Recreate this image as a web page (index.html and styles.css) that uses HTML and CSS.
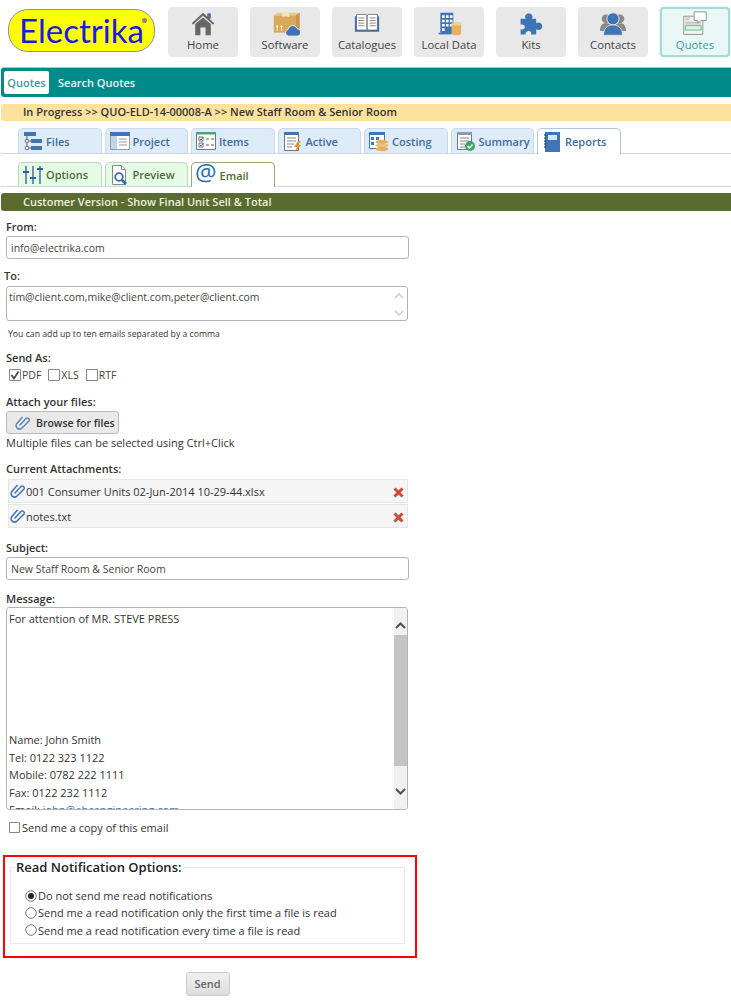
FILE: index.html
```html
<!DOCTYPE html>
<html lang="en">
<head>
<meta charset="utf-8">
<title>Electrika Quotes</title>
<link rel="stylesheet" href="styles.css">
</head>
<body>
<header class="top">
  <div class="logo"><span>Electrika</span><i class="reg"></i></div>
  <nav class="nav">
    <a class="nav-btn"><svg width="30" height="30" viewBox="0 0 30 30"><path d="M15 2 2 14l1.500 1.500L15 5.500l11.500 10L28 14l-5-4.600V3h-3v3.500z" fill="#666"/><path d="M21 3h3v6l-3-2.800z" fill="#3f75b5"/><path d="M6 15 15 7.500 24 15v13h-6v-9h-6v9H6z" fill="#666"/></svg><span>Home</span></a>
    <a class="nav-btn"><svg width="36" height="30" viewBox="0 0 36 30"><path d="M5 5h25v20H5z" fill="#d9a85a"/><path d="M5 5l5-3h25l-5 3z" fill="#eac78a"/><path d="M30 5l5-3v19l-5 4z" fill="#c99645"/><path d="M15 1h8v6l-4-1-4 1z" fill="#f3e3c2"/><path d="M9 17v6M8 18.500l1-1.500 1 1.500M14 17v6M13 18.500l1-1.500 1 1.500" stroke="#fff" fill="none"/><path d="M22 29a4 4 0 0 1-.500-7.800 5.500 5.500 0 0 1 10.500-1 4.500 4.500 0 0 1 1 8.800z" fill="#3f75b5" stroke="#fff"/></svg><span>Software</span></a>
    <a class="nav-btn"><svg width="30" height="30" viewBox="0 0 30 30"><path d="M1 6h28v18H1z" fill="#3f75b5"/><path d="M3 4h11l1 2v17l-1-1H3zM27 4H16l-1 2v17l1-1h11z" fill="#fff" stroke="#555" stroke-width=".8"/><path d="M5 8h7M5 11h7M5 14h7M5 17h7M18 8h7M18 11h7M18 14h7M18 17h7" stroke="#777"/></svg><span>Catalogues</span></a>
    <a class="nav-btn"><svg width="30" height="30" viewBox="0 0 30 30"><path d="M5 2h15v24H5z" fill="#3f75b5"/><path d="M7 5h3v3H7zM11.500 5h3v3h-3zM16 5h3v3h-3zM7 10h3v3H7zM11.500 10h3v3h-3zM16 10h3v3h-3zM7 15h3v3H7zM11.500 15h3v3h-3zM16 15h3v3h-3zM7 20h3v3H7z" fill="#fff"/><path d="M3 25h15v2H3z" fill="#3f75b5"/><path d="M18 15a5.500 2 0 0 1 11 0v11a5.500 2 0 0 1-11 0z" fill="#e8b05e"/><ellipse cx="23.500" cy="15" rx="5.500" ry="2" fill="#f3cf95"/></svg><span>Local Data</span></a>
    <a class="nav-btn"><svg width="30" height="30" viewBox="0 0 30 30"><path d="M3 9h6c-2-3 0-6 3.500-6s5.500 3 3.500 6h5v5c3-2 7 0 7 3.500s-4 5.500-7 3.500v6h-6c1-3-1-4-2.500-4S8 24 9 27H3v-6c2 1 5 0 5-2.500S5 15 3 16z" fill="#3f75b5"/></svg><span>Kits</span></a>
    <a class="nav-btn"><svg width="30" height="30" viewBox="0 0 30 30"><circle cx="7" cy="9" r="5" fill="#888"/><circle cx="23" cy="9" r="5" fill="#888"/><path d="M0 23c0-7 3-9 7-9s7 2 7 9zM16 23c0-7 3-9 7-9s7 2 7 9z" fill="#888"/><circle cx="15" cy="9" r="7" fill="#3f75b5" stroke="#e8e8e8"/><path d="M4 28c0-8 5-12 11-12s11 4 11 12z" fill="#3f75b5" stroke="#e8e8e8"/></svg><span>Contacts</span></a>
    <a class="nav-btn nav-on"><svg width="30" height="30" viewBox="0 0 30 30"><path d="M2 6h22v21H2z" fill="#f3f3f3" stroke="#888"/><path d="M4 8h5M4 10h4M4 13h18M4 15h18" stroke="#aaa"/><path d="M4 17h18v5H4z" fill="#e2f3e6" stroke="#59b27a"/><path d="M14 1h14v10h-7l-3 3v-3h-4z" fill="#fff" stroke="#888"/></svg><span>Quotes</span></a>
  </nav>
</header>

<div class="teal"><a class="teal-on">Quotes</a><a class="teal-link">Search Quotes</a></div>
<div class="crumb">In Progress &gt;&gt; QUO-ELD-14-00008-A &gt;&gt; New Staff Room &amp; Senior Room</div>

<div class="tabs">
  <a class="tab"><svg width="20" height="21" viewBox="0 0 20 21"><path d="M1 1h12v4H1zM8 8h11v4H8zM8 15h11v4H8z" fill="#3f75b5"/><path d="M4 5v12h4M4 10h4" stroke="#666" fill="none"/><circle cx="4" cy="10" r="1.800" fill="#fff" stroke="#666"/><circle cx="4" cy="17" r="1.800" fill="#fff" stroke="#666"/></svg><span>Files</span></a>
  <a class="tab"><svg width="20" height="20" viewBox="0 0 20 20"><path d="M.5 1.500h19v17H.5z" fill="#fff" stroke="#999"/><path d="M0 1h20v4H0z" fill="#3f75b5"/><path d="M1 5h6v13H1z" fill="#bcd6ee"/><path d="M9 8h8M9 11h8M9 14h8" stroke="#999"/></svg><span>Project</span></a>
  <a class="tab"><svg width="20" height="20" viewBox="0 0 20 20"><path d="M.5 1.500h19v17H.5z" fill="#fff" stroke="#777"/><path d="M0 1h20v2.500H0z" fill="#4aa56c"/><path d="M3 6h4v4H3zM3 12h4v4H3z" fill="#fff" stroke="#777"/><path d="M4 8l1 1 2.500-3M4 14l1 1 2.500-3" stroke="#3f75b5" fill="none"/><path d="M10 8h3M15 8h3M10 14h3M15 14h3" stroke="#555"/></svg><span>Items</span></a>
  <a class="tab"><svg width="20" height="21" viewBox="0 0 20 21"><path d="M1.500 1.500h14v18h-14z" fill="#fff" stroke="#777"/><path d="M1 1h15v3H1z" fill="#3f75b5"/><path d="M4 7h9M4 10h9M4 13h7M4 16h5" stroke="#888"/><path d="M15 10l-4 6h3l-2 5 6-7h-3l3-4z" fill="#e8952a"/></svg><span>Active</span></a>
  <a class="tab"><svg width="20" height="21" viewBox="0 0 20 21"><path d="M.5 1.500h15v16H.5z" fill="#fff" stroke="#3f75b5"/><path d="M0 1h16v3H0z" fill="#3f75b5"/><path d="M2 6h3v3H2zM2 11h3v3H2zM7 6h3v3H7z" fill="#3f75b5"/><ellipse cx="13" cy="11" rx="6.500" ry="2.200" fill="#e8b05e"/><ellipse cx="13" cy="14.500" rx="6.500" ry="2.200" fill="#eec07a"/><ellipse cx="13" cy="18" rx="6.500" ry="2.200" fill="#e8b05e"/></svg><span>Costing</span></a>
  <a class="tab"><svg width="20" height="21" viewBox="0 0 20 21"><path d="M1.500 1.500h14v17h-14z" fill="#fff" stroke="#777"/><path d="M1 1h15v3H1z" fill="#8a9ab0"/><path d="M4 7h9M4 10h9M4 13h5M4 16h5" stroke="#888"/><circle cx="14" cy="15" r="5" fill="#3aa565"/><path d="M11.500 15l2 2 3-3.500" stroke="#fff" stroke-width="1.500" fill="none"/></svg><span>Summary</span></a>
  <a class="tab tab-on"><svg class="rep-icon" width="16" height="20" viewBox="0 0 16 20"><path d="M1 0h15v20H1z" fill="#3f75b5"/><path d="M4 3h9v5H4z" fill="#d6e4f3"/><path d="M0 3h2M0 6h2M0 9h2M0 12h2M0 15h2" stroke="#222"/></svg><span>Reports</span></a>
</div>

<div class="tabs tabs-sub">
  <a class="tab"><svg width="20" height="20" viewBox="0 0 20 20"><path d="M3 1v18M10 1v18M17 1v18" stroke="#2f5a8c" stroke-width="1.300"/><path d="M0 6h6v2H0zM7 12h6v2H7zM14 3h6v2h-6z" fill="#2f5f9a"/></svg><span>Options</span></a>
  <a class="tab"><svg width="20" height="22" viewBox="0 0 20 22"><path d="M2.500 1.500h9l4 4v15h-13z" fill="#fff" stroke="#888"/><path d="M11.500 1.500v4h4" fill="#eee" stroke="#888"/><circle cx="9" cy="13" r="3.800" fill="#fff" stroke="#2f6aa8" stroke-width="1.800"/><path d="M12 16l4 4" stroke="#2f6aa8" stroke-width="2.500"/></svg><span>Preview</span></a>
  <a class="tab tab-on"><span class="at">@</span><span>Email</span></a>
</div>

<div class="version">Customer Version - Show Final Unit Sell &amp; Total</div>

<main class="form">
  <label class="lbl lbl-from">From:</label>
  <div class="field">info@electrika.com</div>
  <label class="lbl lbl-to">To:</label>
  <div class="field-to">
    <span>tim@client.com,mike@client.com,peter@client.com</span>
    <div class="mini-bar">
      <svg width="12" height="8" viewBox="0 0 12 8"><path d="M2 6l4-4 4 4" stroke="#ccc" stroke-width="1.500" fill="none"/></svg>
      <svg width="12" height="8" viewBox="0 0 12 8"><path d="M2 2l4 4 4-4" stroke="#ccc" stroke-width="1.500" fill="none"/></svg>
    </div>
  </div>
  <p class="hint">You can add up to ten emails separated by a comma</p>
  <label class="lbl lbl-send">Send As:</label>
  <div class="checks">
    <span class="chk"><svg width="12" height="12" viewBox="0 0 12 12"><path d="M.5.500h11v11H.5z" fill="#fff" stroke="#888"/><path d="M2.500 6l2.500 3.500 4.500-7" stroke="#444" stroke-width="1.700" fill="none"/></svg>PDF</span>
    <span class="chk"><svg width="12" height="12" viewBox="0 0 12 12"><path d="M.5.500h11v11H.5z" fill="#fff" stroke="#888"/></svg>XLS</span>
    <span class="chk"><svg width="12" height="12" viewBox="0 0 12 12"><path d="M.5.500h11v11H.5z" fill="#fff" stroke="#888"/></svg>RTF</span>
  </div>
  <label class="lbl lbl-attach">Attach your files:</label>
  <a class="browse"><svg width="16" height="16" viewBox="0 0 16 16"><path d="M5 11l6.500-7a2 2 0 0 1 3 2.500L7 14a3.500 3.500 0 0 1-5-4.500l6-7" stroke="#5a88bd" stroke-width="1.500" fill="none" transform="translate(-.5 -.5)"/></svg>Browse for files</a>
  <p class="note">Multiple files can be selected using Ctrl+Click</p>
  <label class="lbl lbl-current">Current Attachments:</label>
  <div class="att"><svg width="16" height="16" viewBox="0 0 16 16"><path d="M5 11l6.500-7a2 2 0 0 1 3 2.500L7 14a3.500 3.500 0 0 1-5-4.500l6-7" stroke="#3f75b5" stroke-width="1.500" fill="none" transform="translate(-.5 -.5)"/></svg><span>001 Consumer Units 02-Jun-2014 10-29-44.xlsx</span><svg class="del" width="11" height="11" viewBox="0 0 11 11"><path d="M1.500 1.500l8 8M9.500 1.500l-8 8" stroke="#cf4a34" stroke-width="3"/></svg></div>
  <div class="att"><svg width="16" height="16" viewBox="0 0 16 16"><path d="M5 11l6.500-7a2 2 0 0 1 3 2.500L7 14a3.500 3.500 0 0 1-5-4.500l6-7" stroke="#3f75b5" stroke-width="1.500" fill="none" transform="translate(-.5 -.5)"/></svg><span>notes.txt</span><svg class="del" width="11" height="11" viewBox="0 0 11 11"><path d="M1.500 1.500l8 8M9.500 1.500l-8 8" stroke="#cf4a34" stroke-width="3"/></svg></div>
  <label class="lbl lbl-subject">Subject:</label>
  <div class="field">New Staff Room &amp; Senior Room</div>
  <label class="lbl lbl-message">Message:</label>
  <div class="message">
    <div class="msg-text">
      <p class="msg-first">For attention of MR. STEVE PRESS</p>
      <p>Name: John Smith</p>
      <p>Tel: 0122 323 1122</p>
      <p>Mobile: 0782 222 1111</p>
      <p>Fax: 0122 232 1112</p>
      <p>Email: <a class="mail">john@abcengineering.com</a></p>
    </div>
    <div class="scroll">
      <svg class="arrow-up" width="13" height="9" viewBox="0 0 13 9"><path d="M2 7l4.500-4.500L11 7" stroke="#505050" stroke-width="2" fill="none"/></svg>
      <div class="thumb"></div>
      <svg class="arrow-down" width="13" height="9" viewBox="0 0 13 9"><path d="M2 2l4.500 4.500L11 2" stroke="#505050" stroke-width="2" fill="none"/></svg>
    </div>
  </div>
  <div class="copy"><svg width="12" height="12" viewBox="0 0 12 12"><path d="M.5.500h10v10H.5z" fill="#fff" stroke="#888"/></svg>Send me a copy of this email</div>

  <section class="redbox">
    <fieldset class="notify">
      <legend>Read Notification Options:</legend>
      <div class="radio"><svg width="12" height="12" viewBox="0 0 12 12"><circle cx="6" cy="6" r="5.300" fill="#fff" stroke="#777"/><circle cx="6" cy="6" r="3" fill="#222"/></svg>Do not send me read notifications</div>
      <div class="radio"><svg width="12" height="12" viewBox="0 0 12 12"><circle cx="6" cy="6" r="5.300" fill="#fff" stroke="#777"/></svg>Send me a read notification only the first time a file is read</div>
      <div class="radio"><svg width="12" height="12" viewBox="0 0 12 12"><circle cx="6" cy="6" r="5.300" fill="#fff" stroke="#777"/></svg>Send me a read notification every time a file is read</div>
    </fieldset>
  </section>
  <div class="send-row"><a class="send">Send</a></div>
</main>
</body>
</html>
```

FILE: styles.css
```css
* { box-sizing: border-box; }
html, body { margin: 0; padding: 0; background: #fff; }
body {
  width: 731px;
  height: 1000px;
  overflow: hidden;
  font-family: "Open Sans", "Noto Sans", sans-serif;
  font-size: 11px;
  color: #333;
}
p { margin: 0; }

.top { display: flex; height: 67px; padding: 7px 0 0 8px; }
.logo {
  position: relative;
  width: 147px;
  height: 43px;
  margin-top: 2px;
  background: #ffff00;
  border: 1px solid #8a8ac8;
  border-radius: 20px;
  display: flex;
  align-items: center;
  justify-content: center;
  color: #1a1ae6;
  font-family: "Lato", sans-serif;
  font-size: 33px;
  line-height: 40px;
}
.logo span { display: block; margin-top: -2px; }
.reg { position: absolute; top: 8px; right: 7px; width: 5px; height: 5px; border-radius: 50%; background: #888; }
.nav { display: flex; gap: 12px; margin-left: 13px; }
.nav-btn {
  width: 70px;
  height: 50px;
  background: #e8e8e8;
  border-radius: 4px;
  display: flex;
  flex-direction: column;
  align-items: center;
  padding-top: 4px;
  color: #444;
  font-size: 11.300px;
  line-height: 16px;
}
.nav-btn svg { display: block; height: 26px; flex: none; }
.nav-on {
  background: #e9f8f7;
  border: 2px solid #a5dbd8;
  box-shadow: 0 0 2px #a5dbd8;
  color: #3c9a9a;
  padding-top: 2px;
}

.teal {
  display: flex;
  align-items: center;
  height: 30px;
  margin-left: 1px;
  padding-left: 3px;
  background: #008b8b;
  border-top: 1px solid #8fd0d0;
  border-radius: 3px 0 0 3px;
}
.teal-on {
  width: 45px;
  height: 23px;
  background: #fff;
  border-radius: 2px;
  color: #3c9a9a;
  font-weight: 600;
  font-size: 11px;
  line-height: 23px;
  text-align: center;
}
.teal-link { margin-left: 9px; color: #e6f6f6; font-weight: 600; font-size: 11px; }

.crumb {
  height: 17px;
  margin: 7px 0 0 1px;
  padding-left: 22px;
  background: #fce29c;
  border-radius: 3px 0 0 3px;
  color: #333;
  font-weight: 600;
  font-size: 11px;
  line-height: 16px;
}

.tabs {
  display: flex;
  gap: 3px;
  height: 26px;
  margin: 7px 0 0 1px;
  padding-left: 17px;
  border-bottom: 1px solid #ccd6e6;
}
.tab {
  display: flex;
  align-items: center;
  gap: 3px;
  width: 83.500px;
  height: 25px;
  padding-left: 4px;
  background: #deebf9;
  border: 1px solid #c9d9ec;
  border-bottom: 0;
  border-radius: 5px 5px 0 0;
  color: #3f6c9f;
  font-weight: 600;
  font-size: 11px;
}
.tab svg { flex: none; }
.rep-icon { margin: 0 2px 0 2px; }
.tab-on {
  height: 26px;
  background: #fff;
  border-color: #b4c6dc;
  position: relative;
  z-index: 1;
}
.tabs-sub { margin-top: 8px; height: 25px; }
.tabs-sub .tab {
  background: #e4fbe6;
  border-color: #b9dcbb;
  color: #4d6d35;
  height: 24px;
}
.tabs-sub .tab-on { background: #fff; border-color: #97a87a; height: 25px; }
.at { font-size: 24px; line-height: 20px; color: #2a6cb0; font-weight: 400; margin: -6px 0 0 -1px; }

.version {
  height: 18px;
  margin: 6px 0 0 1px;
  padding-left: 22px;
  background: #5a6b2f;
  border-radius: 3px 0 0 3px;
  color: #ecf0dc;
  font-weight: 600;
  font-size: 11px;
  line-height: 18px;
}

.form { padding-left: 6px; display: flex; flex-direction: column; align-items: flex-start; }
.lbl { display: block; font-weight: 600; font-size: 11px; line-height: 16px; color: #333; }
.lbl-from { margin-top: 8px; }
.lbl-to { margin: 9px 0 2px -2px; }
.lbl-send { margin-top: 9px; }
.lbl-attach { margin-top: 11px; }
.lbl-current { margin-top: 10px; }
.lbl-subject { margin-top: 12px; }
.lbl-message { margin-top: 11px; }

.field {
  width: 403px;
  height: 23px;
  margin-top: 1px;
  padding-left: 4px;
  border: 1px solid #b4b4b4;
  border-radius: 3px;
  font-size: 10.500px;
  line-height: 23px;
  color: #444;
}
.field-to {
  display: flex;
  justify-content: space-between;
  width: 402px;
  height: 35px;
  padding: 2px 2px 0 2px;
  border: 1px solid #b4b4b4;
  border-radius: 3px;
  font-size: 10.500px;
  line-height: 16px;
  color: #444;
}
.mini-bar { display: flex; flex-direction: column; gap: 9px; padding-top: 3px; }
.mini-bar svg { display: block; }
.hint { margin: 7px 0 0 2px; font-size: 8.700px; line-height: 13px; color: #333; }
.checks { display: flex; gap: 7px; margin: 1px 0 0 3px; font-size: 10.500px; line-height: 16px; color: #444; }
.chk { display: flex; align-items: center; gap: 1px; }
.browse {
  display: flex;
  align-items: center;
  gap: 5px;
  width: 113px;
  height: 23px;
  margin-top: 1px;
  padding-left: 8px;
  background: #e9e9e9;
  border: 1px solid #bbb;
  border-radius: 3px;
  font-weight: 600;
  font-size: 10.500px;
  color: #333;
}
.note { font-size: 11px; line-height: 17px; color: #333; }
.att {
  display: flex;
  align-items: center;
  width: 400px;
  height: 24px;
  margin: 1px 0 0 2px;
  padding: 0 3px 0 1px;
  background: #f5f5f5;
  border: 1px solid #e6e6e6;
  font-size: 11px;
  color: #333;
}
.lbl-current + .att { margin-top: 2px; }
.att span { flex: 1; }
.del { display: block; margin-top: 2px; }
.message {
  display: flex;
  width: 402px;
  height: 203px;
  border: 1px solid #b4b4b4;
  border-radius: 3px;
  overflow: hidden;
}
.msg-text { flex: 1; padding: 2px 0 0 2px; font-size: 11px; line-height: 17.400px; color: #333; overflow: hidden; }
.msg-first { margin-bottom: 104px; }
.mail { color: #3f75b5; }
.scroll { width: 13px; background: #f1f1f1; position: relative; }
.thumb { position: absolute; left: 0; top: 27px; width: 13px; height: 131px; background: #c4c4c4; }
.arrow-up { position: absolute; left: 0; top: 13px; }
.arrow-down { position: absolute; left: 0; bottom: 13px; }
.copy { display: flex; align-items: center; gap: 1px; margin: 9px 0 0 3px; font-size: 11px; line-height: 17px; color: #333; }

.redbox {
  width: 414px;
  height: 103px;
  margin: 19px 0 0 -3px;
  padding: 0 10px 0 5px;
  border: 2px solid #f00;
}
.notify {
  margin: 0;
  padding: 10px 0 0 14px;
  width: 395px;
  height: 87px;
  border: 1px solid #e8e8e8;
}
.notify legend {
  padding: 0 1px;
  margin-left: -10px;
  font-weight: 600;
  font-size: 13px;
  line-height: 20px;
  color: #222;
}
.radio { display: flex; align-items: center; gap: 1px; font-size: 11px; line-height: 17.300px; color: #333; }
.send-row { width: 403px; display: flex; justify-content: center; margin-top: 14px; }
.send {
  width: 44px;
  height: 24px;
  background: linear-gradient(#f1f1f1, #dcdcdc);
  border: 1px solid #ccc;
  border-radius: 3px;
  text-align: center;
  font-weight: 600;
  font-size: 11px;
  line-height: 22px;
  color: #666;
}
```
